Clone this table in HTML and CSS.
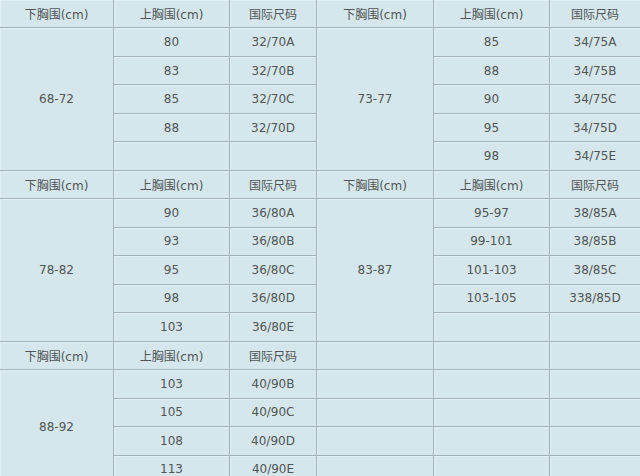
FILE: index.html
```html
<!DOCTYPE html>
<html lang="zh-CN">
<head>
<meta charset="utf-8">
<title>尺码表</title>
<link rel="stylesheet" href="styles.css">
</head>
<body>
<div class="sheet">
  <div class="c h">下胸围(cm)</div><div class="c h">上胸围(cm)</div><div class="c h">国际尺码</div>
  <div class="c h">下胸围(cm)</div><div class="c h">上胸围(cm)</div><div class="c h">国际尺码</div>

  <div class="c g">68-72</div><div class="c">80</div><div class="c">32/70A</div>
  <div class="c g">73-77</div><div class="c">85</div><div class="c">34/75A</div>
  <div class="c">83</div><div class="c">32/70B</div><div class="c">88</div><div class="c">34/75B</div>
  <div class="c">85</div><div class="c">32/70C</div><div class="c">90</div><div class="c">34/75C</div>
  <div class="c">88</div><div class="c">32/70D</div><div class="c">95</div><div class="c">34/75D</div>
  <div class="c"></div><div class="c"></div><div class="c">98</div><div class="c">34/75E</div>

  <div class="c h">下胸围(cm)</div><div class="c h">上胸围(cm)</div><div class="c h">国际尺码</div>
  <div class="c h">下胸围(cm)</div><div class="c h">上胸围(cm)</div><div class="c h">国际尺码</div>

  <div class="c g">78-82</div><div class="c">90</div><div class="c">36/80A</div>
  <div class="c g">83-87</div><div class="c">95-97</div><div class="c">38/85A</div>
  <div class="c">93</div><div class="c">36/80B</div><div class="c">99-101</div><div class="c">38/85B</div>
  <div class="c">95</div><div class="c">36/80C</div><div class="c">101-103</div><div class="c">38/85C</div>
  <div class="c">98</div><div class="c">36/80D</div><div class="c">103-105</div><div class="c">338/85D</div>
  <div class="c">103</div><div class="c">36/80E</div><div class="c"></div><div class="c"></div>

  <div class="c h">下胸围(cm)</div><div class="c h">上胸围(cm)</div><div class="c h">国际尺码</div>
  <div class="c"></div><div class="c"></div><div class="c"></div>

  <div class="c g4">88-92</div><div class="c">103</div><div class="c">40/90B</div>
  <div class="c"></div><div class="c"></div><div class="c"></div>
  <div class="c">105</div><div class="c">40/90C</div>
  <div class="c"></div><div class="c"></div><div class="c"></div>
  <div class="c">108</div><div class="c">40/90D</div>
  <div class="c"></div><div class="c"></div><div class="c"></div>
  <div class="c">113</div><div class="c">40/90E</div>
  <div class="c"></div><div class="c"></div><div class="c"></div>
</div>
</body>
</html>
```

FILE: styles.css
```css
html, body {
  margin: 0;
  padding: 0;
  background: #d5e7ec;
  overflow: hidden;
}

.sheet {
  display: grid;
  width: 641px;
  grid-template-columns: 114px 116px 87px 117px 116px 91px;
  grid-template-rows: repeat(17, 28.47px);
  background: #d5e7ec;
  font-family: "DejaVu Sans", "Noto Sans CJK SC", sans-serif;
  font-size: 12px;
  color: #505557;
}

.c {
  display: flex;
  align-items: center;
  justify-content: center;
  border-right: 1px solid #a2b2b8;
  border-bottom: 1px solid #a2b2b8;
  box-shadow: inset 1px 1px 0 #e2eff2;
  white-space: nowrap;
}

.g {
  grid-row: span 5;
}

.g4 {
  grid-row: span 4;
}
```
